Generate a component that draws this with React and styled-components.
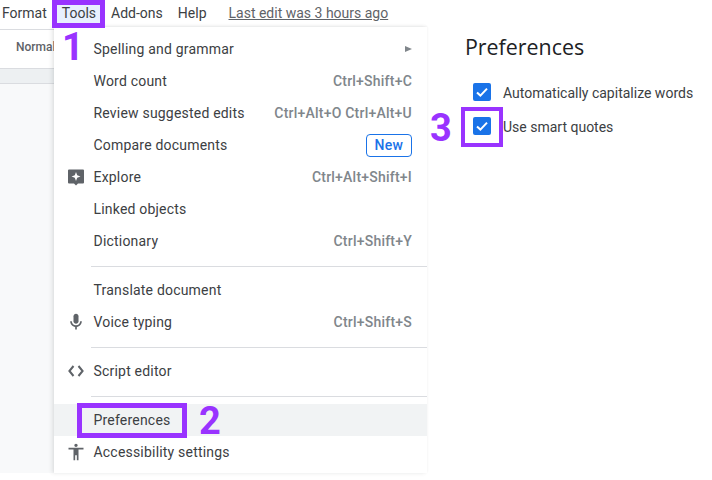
import React from "react"
import styled, { createGlobalStyle } from "styled-components"

const purple = "#9933ff"

const GlobalStyle = createGlobalStyle`
    html, body {
        margin: 0;
        padding: 0;
        background: #fff;
    }
    body {
        font-family: Roboto, "Liberation Sans", sans-serif;
        color: #3c4043;
    }
`

const Page = styled.div`
    width: 712px;
    height: 480px;
    overflow: hidden;
    position: relative;
    background: #fff;
`

const MenuBar = styled.div`
    height: 29px;
    display: flex;
    align-items: center;
    gap: 15px;
    font-size: 14px;
    padding-left: 2px;
    padding-bottom: 3px;
    box-sizing: border-box;
`

const MenuItem = styled.div`
    padding: ${props => props.active ? "2px 4px 2px 5px" : "0"};
    margin: ${props => props.active ? "0 -4px 0 -5px" : "0"};
    background: ${props => props.active ? "#e8f0fe" : "transparent"};
    color: #3c4043;
    white-space: nowrap;
`

const LastEdit = styled.div`
    margin-left: 7px;
    font-size: 14px;
    color: #5f6368;
    text-decoration: underline;
    white-space: nowrap;
`

const Content = styled.div`
    display: flex;
`

const DocPane = styled.div`
    width: 427px;
    flex: none;
    height: 444px;
    display: flex;
    flex-direction: column;
`

const Toolbar = styled.div`
    height: 40px;
    flex: none;
    box-sizing: border-box;
    border-top: 1px solid #dadce0;
    border-bottom: 1px solid #dadce0;
    padding: 10px 0 0 16px;
    font-size: 12px;
    font-weight: 500;
    color: #5f6368;
`

const Ruler = styled.div`
    height: 14px;
    flex: none;
    background: #edf0f2;
    border-bottom: 1px solid #dadce0;
`

const DocBody = styled.div`
    flex: 1;
    background: #f8f9fa;
`

const Menu = styled.div`
    position: absolute;
    left: 54px;
    top: 27px;
    width: 373px;
    height: 446px;
    box-sizing: border-box;
    padding-top: 6px;
    background: #fff;
    box-shadow: -2px 0 4px rgba(60, 64, 67, 0.12), 0 -1px 2px rgba(60, 64, 67, 0.06);
`

const Row = styled.div`
    height: 32px;
    display: flex;
    align-items: center;
    padding-left: 12px;
    padding-right: 15px;
    font-size: 14px;
    letter-spacing: 0.2px;
    color: #3c4043;
    background: ${props => props.highlight ? "#f1f3f4" : "transparent"};
    margin-top: ${props => props.highlight ? "1px" : "0"};
`

const IconSlot = styled.span`
    width: 20px;
    height: 20px;
    margin-right: 7.5px;
    display: flex;
    align-items: center;
    justify-content: center;
    color: #5f6368;
    flex: none;
`

const Label = styled.span`
    flex: 1;
    white-space: nowrap;
`

const Shortcut = styled.span`
    color: #80868b;
    font-weight: 500;
    font-size: 14px;
    letter-spacing: 0.22px;
    white-space: nowrap;
`

const NewBadge = styled.span`
    border: 1px solid #1a73e8;
    border-radius: 4px;
    color: #1a73e8;
    font-weight: 500;
    font-size: 14px;
    line-height: 21px;
    padding: 0 8px;
`

const Arrow = styled.span`
    width: 0;
    height: 0;
    border-left: 7px solid #80868b;
    border-top: 3.5px solid transparent;
    border-bottom: 3.5px solid transparent;
`

const Separator = styled.div`
    height: 1px;
    margin: 9px 0 7px 37px;
    background: #dadce0;
`

const Panel = styled.div`
    flex: 1;
    padding: 5px 0 0 38px;
`

const PanelTitle = styled.div`
    font-family: "Open Sans", Roboto, sans-serif;
    font-size: 21.4px;
    line-height: 26px;
    color: #202124;
    margin-bottom: 16px;
`

const Option = styled.div`
    height: 34px;
    display: flex;
    align-items: center;
    padding-left: 8px;
    font-size: 14px;
    color: #3c4043;
    white-space: nowrap;
`

const CheckBox = styled.span`
    width: 18px;
    height: 18px;
    flex: none;
    margin: -2px 12px 0 0;
    border-radius: 2px;
    background: #1a73e8;
    display: flex;
    align-items: center;
    justify-content: center;
`

const Highlight = styled.div`
    position: absolute;
    left: ${props => props.x}px;
    top: ${props => props.y}px;
    width: ${props => props.w}px;
    height: ${props => props.h}px;
    box-sizing: border-box;
    border: ${props => props.size}px solid ${purple};
`

const Step = styled.div`
    position: absolute;
    left: ${props => props.x}px;
    top: ${props => props.y}px;
    font-family: Roboto, "Liberation Sans", sans-serif;
    font-size: 38px;
    line-height: 40px;
    font-weight: 700;
    color: ${purple};
`

const Check = () => (
    <svg width="14" height="14" viewBox="0 0 14 14" fill="none">
        <path d="M2 7.4 L5.4 10.6 L12 3.6" stroke="#fff" strokeWidth="2" />
    </svg>
)

const ExploreIcon = () => (
    <svg width="16" height="17" viewBox="0 0 16 17">
        <path
            fillRule="evenodd"
            fill="#5f6368"
            d="M1 0.5h14a1 1 0 0 1 1 1v12a1 1 0 0 1-1 1h-5l-2 2-2-2H1a1 1 0 0 1-1-1v-12a1 1 0 0 1 1-1zM8 3l-1.2 3.3L3.5 7.5l3.3 1.2L8 12l1.2-3.3 3.3-1.2-3.3-1.2z"
        />
    </svg>
)

const MicIcon = () => (
    <svg width="20" height="20" viewBox="0 0 24 24" fill="#5f6368">
        <path d="M12 14c1.66 0 3-1.34 3-3V5c0-1.66-1.34-3-3-3S9 3.34 9 5v6c0 1.66 1.34 3 3 3z" />
        <path d="M17 11c0 2.76-2.24 5-5 5s-5-2.24-5-5H5c0 3.53 2.61 6.43 6 6.92V21h2v-3.08c3.39-.49 6-3.39 6-6.92h-2z" />
    </svg>
)

const CodeIcon = () => (
    <svg width="16" height="12" viewBox="0 0 16 12" fill="none" stroke="#5f6368" strokeWidth="2">
        <path d="M5.5 1 L1.4 6 L5.5 11" />
        <path d="M10.5 1 L14.6 6 L10.5 11" />
    </svg>
)

const AccessIcon = () => (
    <svg width="20" height="20" viewBox="0 0 24 24" fill="#5f6368">
        <path d="M12 2c1.1 0 2 .9 2 2s-.9 2-2 2-2-.9-2-2 .9-2 2-2zm9 7h-6v13h-2v-6h-2v6H9V9H3V7h18v2z" />
    </svg>
)

const menuGroups = [
    [
        { label: "Spelling and grammar", arrow: true },
        { label: "Word count", shortcut: "Ctrl+Shift+C" },
        { label: "Review suggested edits", shortcut: "Ctrl+Alt+O Ctrl+Alt+U" },
        { label: "Compare documents", badge: "New" },
        { label: "Explore", icon: <ExploreIcon />, shortcut: "Ctrl+Alt+Shift+I" },
        { label: "Linked objects" },
        { label: "Dictionary", shortcut: "Ctrl+Shift+Y" },
    ],
    [
        { label: "Translate document" },
        { label: "Voice typing", icon: <MicIcon />, shortcut: "Ctrl+Shift+S" },
    ],
    [
        { label: "Script editor", icon: <CodeIcon /> },
    ],
    [
        { label: "Preferences", highlight: true },
        { label: "Accessibility settings", icon: <AccessIcon /> },
    ],
]

export default function App() {
    return (
        <Page>
            <GlobalStyle />
            <MenuBar>
                <MenuItem>Format</MenuItem>
                <MenuItem active>Tools</MenuItem>
                <MenuItem>Add-ons</MenuItem>
                <MenuItem>Help</MenuItem>
                <LastEdit>Last edit was 3 hours ago</LastEdit>
            </MenuBar>
            <Content>
                <DocPane>
                    <Toolbar>Normal</Toolbar>
                    <Ruler />
                    <DocBody />
                </DocPane>
                <Panel>
                    <PanelTitle>Preferences</PanelTitle>
                    <Option><CheckBox><Check /></CheckBox>Automatically capitalize words</Option>
                    <Option><CheckBox><Check /></CheckBox>Use smart quotes</Option>
                </Panel>
            </Content>
            <Menu>
                {menuGroups.map((group, i) => (
                    <React.Fragment key={i}>
                        {i > 0 && <Separator />}
                        {group.map(item => (
                            <Row key={item.label} highlight={item.highlight}>
                                <IconSlot>{item.icon}</IconSlot>
                                <Label>{item.label}</Label>
                                {item.shortcut && <Shortcut>{item.shortcut}</Shortcut>}
                                {item.badge && <NewBadge>{item.badge}</NewBadge>}
                                {item.arrow && <Arrow />}
                            </Row>
                        ))}
                    </React.Fragment>
                ))}
            </Menu>
            <Highlight x={52} y={0} w={53} h={28} size={5} />
            <Highlight x={77} y={403} w={110} h={35} size={5} />
            <Highlight x={461} y={107} w={42} h={40} size={4} />
            <Step x={62} y={27}>1</Step>
            <Step x={199} y={401}>2</Step>
            <Step x={430} y={108}>3</Step>
        </Page>
    )
}
